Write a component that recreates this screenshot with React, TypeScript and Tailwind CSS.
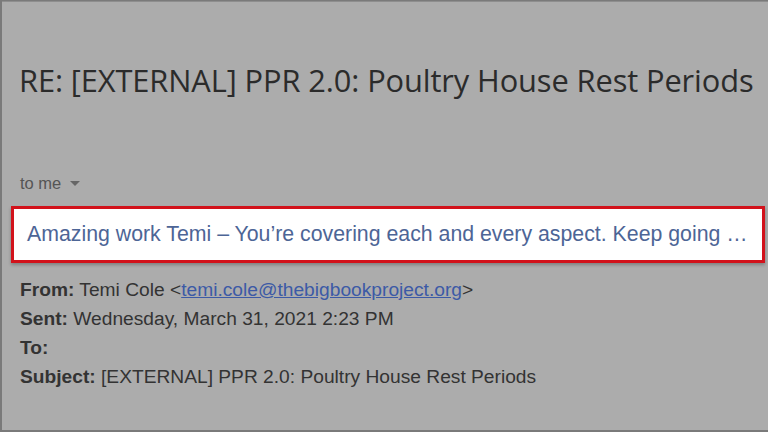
export default function App() {
  return (
    <div className="w-[768px] h-[432px] overflow-hidden bg-[#7a7a7a] pt-px">
      <div className="h-[429px] ml-[2px] bg-[#acacac] border-t border-[#8e8e8e] font-['Liberation_Sans',Arial,sans-serif]">
        <h1 className="pt-[58px] pl-[17px] text-[30.8px] leading-[40px] text-[#2b2b2b] font-['Open_Sans','Noto_Sans',sans-serif] tracking-[-0.1px] whitespace-nowrap">
          RE: [EXTERNAL] PPR 2.0: Poultry House Rest Periods
        </h1>
        <div className="mt-[73px] pl-[18px] flex items-center gap-[9px] text-[16.5px] leading-[20px] text-[#555]">
          <span>to me</span>
          <span className="w-0 h-0 border-l-[5px] border-r-[5px] border-t-[5px] border-l-transparent border-r-transparent border-t-[#666]" />
        </div>
        <div className="mt-[13px] ml-[9px] w-[754px] h-[57px] border-[3px] border-[#d2121b] bg-white shadow-[0_2px_3px_rgba(0,0,0,0.25)] flex items-center pl-[13px]">
          <span className="text-[21.3px] text-[#4d6596] whitespace-nowrap">
            Amazing work Temi – You’re covering each and every aspect. Keep going …
          </span>
        </div>
        <div className="mt-[12px] pl-[18px] text-[19.2px] leading-[29px] text-[#333]">
          <div>
            <b>From:</b> Temi Cole &lt;<span className="text-[#3c5aa6] underline">temi.cole@thebigbookproject.org</span>&gt;
          </div>
          <div>
            <b>Sent:</b> Wednesday, March 31, 2021 2:23 PM
          </div>
          <div>
            <b>To:</b>
          </div>
          <div>
            <b>Subject:</b> [EXTERNAL] PPR 2.0: Poultry House Rest Periods
          </div>
        </div>
      </div>
    </div>
  )
}
